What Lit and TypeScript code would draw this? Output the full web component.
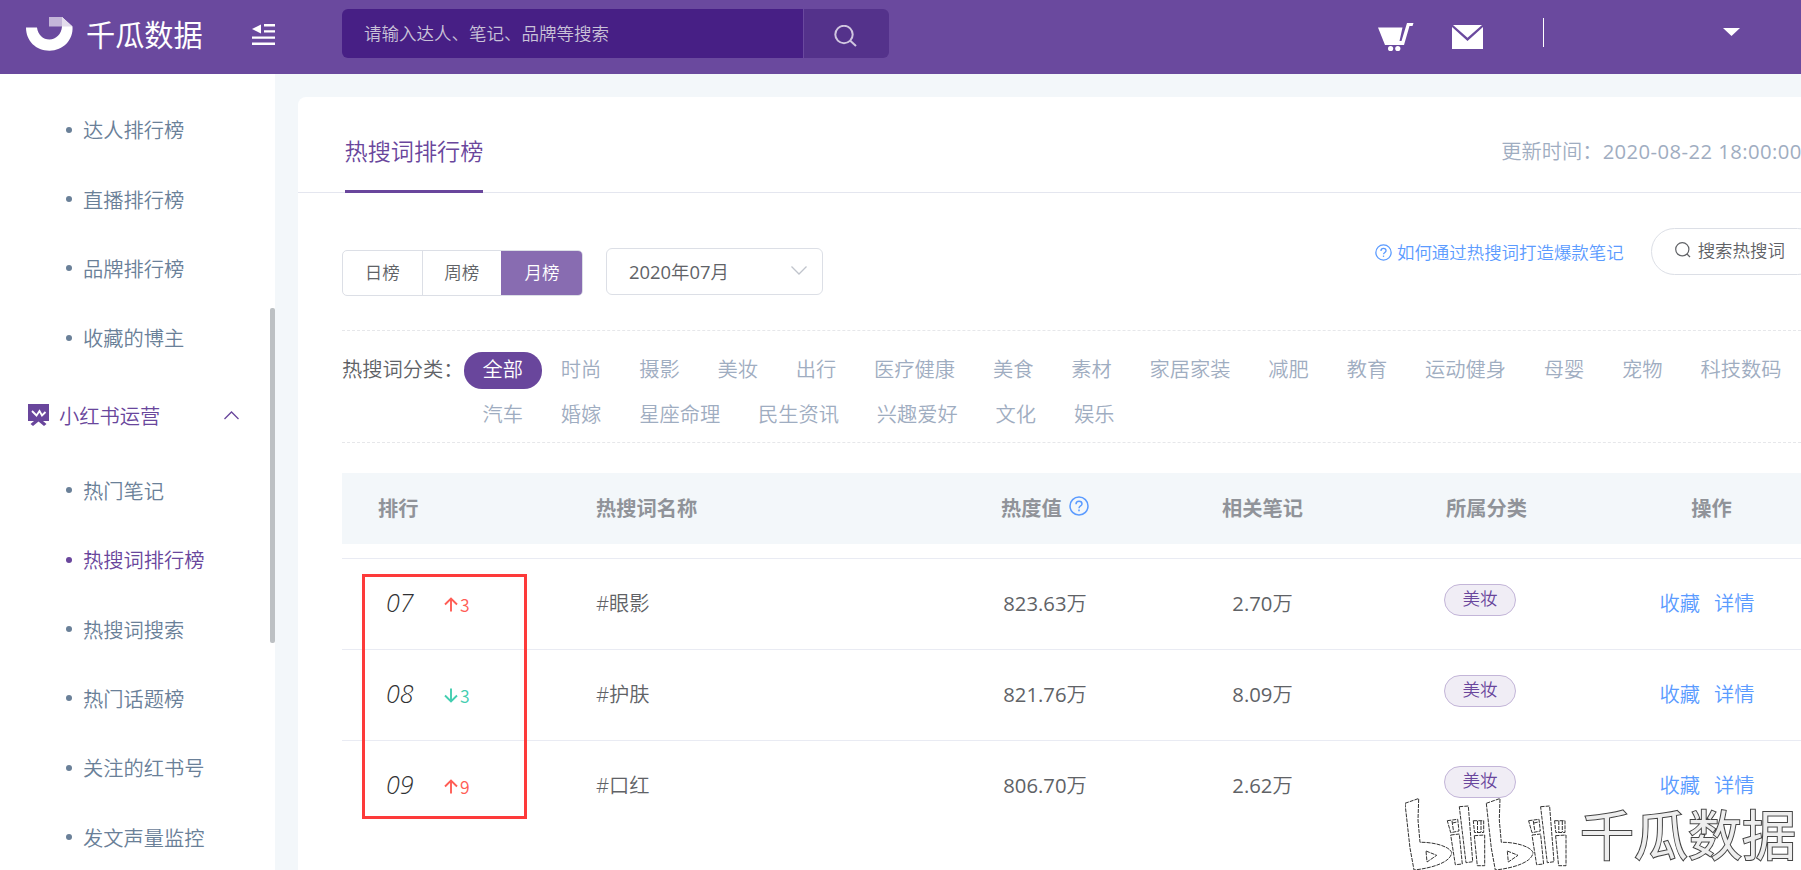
import { LitElement, html, css, svg } from "lit";
import { customElement } from "lit/decorators.js";
import { classMap } from "lit/directives/class-map.js";

interface Row {
  rank: string;
  up: boolean;
  delta: number;
  name: string;
  heat: string;
  notes: string;
}

const TOP_MENU = ["达人排行榜", "直播排行榜", "品牌排行榜", "收藏的博主"];
const SUB_MENU = ["热门笔记", "热搜词排行榜", "热搜词搜索", "热门话题榜", "关注的红书号", "发文声量监控"];
const CATEGORIES = [
  "全部", "时尚", "摄影", "美妆", "出行", "医疗健康", "美食", "素材", "家居家装", "减肥", "教育",
  "运动健身", "母婴", "宠物", "科技数码", "汽车", "婚嫁", "星座命理", "民生资讯", "兴趣爱好", "文化", "娱乐",
];
const ROWS: Row[] = [
  { rank: "07", up: true, delta: 3, name: "#眼影", heat: "823.63", notes: "2.70" },
  { rank: "08", up: false, delta: 3, name: "#护肤", heat: "821.76", notes: "8.09" },
  { rank: "09", up: true, delta: 9, name: "#口红", heat: "806.70", notes: "2.62" },
];

const help = (size: number) => html`<svg width=${size} height=${size} viewBox="0 0 20 20" fill="none" stroke="currentColor" stroke-width="1.5">
  <circle cx="10" cy="10" r="9"></circle>
  <path d="M7 8.2C7 6.2 8.3 5.2 10 5.2S13 6.300 13 7.900C13 9.900 10 10 10 12.200"></path>
  <path d="M10 13.600V15.200"></path>
</svg>`;

// One half of the watermark mark: a tall slanted stem with a bowl, then narrow bars.
const markHalf = svg`
  <path d="M0 5.300L13.700 .5L13 22L15 44.300C28 44 44 48 46.700 54.500C46 64 28 70 9 72L5 50Z"></path>
  <path d="M21 53L31.700 57.300L22 64Z"></path>
  <path d="M42.300 22.700L52.700 21.300L54 33L45.700 34.700ZM47 23L48.500 33M47.500 25L52 24"></path>
  <path d="M45.700 37L54.300 36L57.300 66L50.300 66.700Z"></path>
  <path d="M54.300 8.700L63.300 8L67.700 63.700L61 64.700Z"></path>
  <path d="M68.300 22.700H78.700V34.500H69.500ZM72.500 23V34M76 23V34M69.300 37.700L79.700 37V67.700H72.300Z"></path>`;

@customElement("app-root")
export class AppRoot extends LitElement {
  static styles = css`
    :host {
      display: block;
      height: 870px;
      overflow: hidden;
      position: relative;
      background: #f3f7fa;
      font-family: "Open Sans", "Noto Sans CJK SC", sans-serif;
      font-size: 20.25px;
      font-weight: 350;
      color: #606266;
      white-space: nowrap;
    }
    * { box-sizing: border-box; }
    svg { display: block; flex: none; }
    b { font-weight: 400; }
    .header {
      height: 74px;
      display: flex;
      align-items: flex-start;
      background: #6a499e;
      color: #fff;
    }
    .logo { margin: 17px 0 0 26px; }
    .brand { margin-left: 12px; width: 118px; height: 60px; line-height: 60px; font-size: 29.200px; font-weight: 400; margin-top: 5px; }
    .fold { margin: 24px 0 0 48px; }
    .search { margin: 9px 0 0 66px; display: flex; gap: 1px; height: 49px; border-radius: 6px; overflow: hidden; }
    .field { width: 461px; padding-left: 22px; background: #471f85; color: #c9c2d8; font-size: 17.5px; line-height: 48px; }
    .go { width: 85px; background: #54328b; padding: 16px 0 0 30px; }
    .cart { margin: 23px 0 0 489px; }
    .mail { margin: 25px 0 0 38px; }
    .bar { width: 1px; height: 29px; margin: 18px 0 0 60px; background: #fff; }
    .caret { margin: 28px 0 0 179px; }
    .body { display: flex; height: 796px; }
    .side { width: 275px; flex: none; background: #fff; display: flex; padding-top: 21px; color: #6a8098; }
    .menu { width: 270px; }
    .item { height: 69.4px; display: flex; align-items: center; padding-left: 66px; }
    .item::before { content: ""; width: 6px; height: 6px; border-radius: 3px; background: currentColor; margin-right: 11px; }
    .on { color: #69469c; }
    .group { height: 83px; display: flex; align-items: center; padding: 2px 31px 0 28px; color: #69469c; }
    .group span { flex: 1; margin-left: 10px; }
    .thumb { width: 5px; height: 335px; margin-top: 213px; border-radius: 2px; background: #bcc0c3; }
    .card { flex: none; width: 1560px; margin: 23px 0 0 23px; background: #fff; border-radius: 8px 0 0 0; }
    .tabs { height: 96px; border-bottom: 1px solid #e4e6ef; display: flex; padding-left: 46.500px; }
    .tab { height: 96px; line-height: 108px; font-size: 23.150px; color: #69469c; border-bottom: 3px solid #69469c; }
    .time { margin-left: 1018px; line-height: 109px; color: #9fadc1; }
    .date { letter-spacing: 0.420px; font-weight: 400; }
    .content { width: 1484px; margin-left: 44px; }
    .filters { height: 137px; display: flex; align-items: flex-start; padding-top: 35px; }
    .seg { display: flex; height: 46px; margin-top: 22px; border: 1px solid #dcdfe6; border-radius: 5px; overflow: hidden; font-size: 17.5px; line-height: 43px; }
    .seg div { width: 79.5px; text-align: center; border-right: 1px solid #dcdfe6; }
    .seg .act { width: 82px; margin: -1px -1px; line-height: 45px; background: #886cb1; color: #fff; border: 0; }
    .select { width: 217px; height: 47px; margin: 20px 0 0 23px; border: 1px solid #dcdfe6; border-radius: 6px; display: flex; align-items: center; justify-content: space-between; padding: 0 15px 2px 22px; font-size: 18.400px; }
    .link { color: #5b9bff; }
    .how { margin: 12px 0 0 552px; height: 24px; line-height: 24px; display: flex; align-items: center; font-size: 17.450px; gap: 5px; }
    .find { margin-left: 27px; width: 170px; height: 47px; border: 1px solid #dcdfe6; border-radius: 24px; display: flex; align-items: center; padding: 0 0 4px 23px; gap: 7px; font-size: 17.450px; }
    .cats { height: 113px; border: dashed #e6e7ea; border-width: 1px 0; display: flex; padding-top: 21px; line-height: 35px; }
    .label { width: 122px; }
    .tags { width: 1350px; display: flex; flex-wrap: wrap; align-content: flex-start; row-gap: 8px; color: #9fadc1; }
    .tags div { height: 37px; padding: 0 19.300px 0 18.500px; border-radius: 18px; }
    .tags .act { background: #69469c; color: #fff; }
    .grid { display: grid; grid-template-columns: 254px 340px 218px 217px 231px 219px; align-items: center; justify-items: center; }
    .head { margin-top: 30px; height: 71px; padding-bottom: 2px; background: #f3f7fa; color: #909399; font-weight: 700; }
    .rows { margin-top: 14px; position: relative; }
    .row { height: 91px; padding-bottom: 4px; border-top: 1px solid #e9ebf3; }
    .left { justify-self: start; }
    .rank { justify-self: start; margin-left: 44px; display: flex; align-items: center; height: 44px; }
    .rank i { width: 58px; font-size: 25px; color: #303133; font-weight: 350; }
    .up, .down { display: flex; align-items: center; font-size: 17.5px; gap: 2px; margin-top: 4px; font-family: "Noto Sans CJK SC", sans-serif; }
    .up { color: #ff5d55; }
    .down { color: #43ceb0; }
    .heat { display: flex; align-items: center; gap: 7px; }
    .heat .link { margin-bottom: 4px; }
    .chip { width: 72px; height: 32px; line-height: 27px; margin: 0 13px 4px 0; text-align: center; font-size: 17.5px; color: #69469c; background: #f0edf5; border: 1px solid #c3b5d8; border-radius: 16px; }
    .ops { display: flex; gap: 14px; margin-right: 9px; }
    .frame { position: absolute; left: 20px; top: 16px; width: 165px; height: 245px; border: 3px solid #fd3a3a; }
    .mark { position: absolute; left: 1405px; top: 798px; display: flex; }
    .mark span { font-size: 54px; line-height: 70px; margin-left: 13px; font-weight: 400; color: #eee; -webkit-text-stroke: 2px #444; paint-order: stroke fill; font-family: "Noto Sans CJK SC", sans-serif; }
  `;

  private header() {
    return html`<div class="header">
      <svg class="logo" width="48" height="34" viewBox="0 0 48 34">
        <path d="M0 10.500H11C12 18 17 22.500 23.500 22.500S35.500 17 36 9.500V0L46.500 9.500C47.500 23 37 33.700 23.500 33.700S0 24 0 10.500Z" fill="#fff"></path>
        <path d="M23 0H36V9.500H23Z" fill="#c4b6d9"></path><path d="M36 0L46.500 9.500H36Z" fill="#e3dcec"></path>
      </svg>
      <div class="brand">千瓜数据</div>
      <svg class="fold" width="24" height="22" viewBox="0 0 24 22" fill="#fff">
        <path d="M0 5L9 .5V9.500ZM12 0H23V2.500H12ZM12 6.200H23V8.500H12ZM0 12.500H23V14.700H0ZM0 18.600H23V21H0Z"></path>
      </svg>
      <div class="search">
        <div class="field">请输入达人、笔记、品牌等搜索</div>
        <div class="go"><svg width="23" height="22" viewBox="0 0 23 22" fill="none" stroke="#d0c6df" stroke-width="2">
          <circle cx="10" cy="9.500" r="8.700"></circle><path d="M16 15.500L22 21"></path></svg></div>
      </div>
      <svg class="cart" width="36" height="29" viewBox="0 0 36 29" fill="#fff">
        <path d="M0 4.500H24.500L21.500 18H23.500L29 0H35.500L34.500 3H31.500L26 22H7Z"></path>
        <circle cx="12.600" cy="25.500" r="2.600"></circle><circle cx="19.800" cy="25.500" r="2.600"></circle>
      </svg>
      <svg class="mail" width="31" height="24" viewBox="0 0 31 24" fill="#fff">
        <path d="M1 0H30L15.500 12.800ZM0 2L15.500 16L31 2V24H0Z"></path>
      </svg>
      <div class="bar"></div>
      <svg class="caret" width="17" height="8" viewBox="0 0 17 8"><path d="M0 0H17L8.500 8Z" fill="#fff"></path></svg>
    </div>`;
  }

  private side() {
    return html`<div class="side">
      <div class="menu">
        ${TOP_MENU.map((t) => html`<div class="item">${t}</div>`)}
        <div class="group">
          <svg width="21" height="22" viewBox="0 0 21 22"><path d="M0 0H21V17H15L18.500 20L16 22L10.500 17.500L5 22L2.500 20L6 17H0Z" fill="#69469c"></path>
            <path d="M4 7L8.500 11.500L11.500 7L14 11.500L17.500 8" fill="none" stroke="#fff" stroke-width="1.800"></path></svg>
          <span>小红书运营</span>
          <svg width="15" height="9" viewBox="0 0 15 9" fill="none" stroke="#69469c" stroke-width="1.300"><path d="M.5 8L7.500 1L14.500 8"></path></svg>
        </div>
        ${SUB_MENU.map((t, i) => html`<div class=${classMap({ item: true, on: i === 1 })}>${t}</div>`)}
      </div>
      <div class="thumb"></div>
    </div>`;
  }

  private row(r: Row) {
    return html`<div class="grid row">
      <div class="rank"><i>${r.rank}</i>
        <div class=${r.up ? "up" : "down"}>
          <svg width="14" height="15" viewBox="0 0 14 15" fill="none" stroke="currentColor" stroke-width="1.900">
            <path d=${r.up ? "M7 14.500V1.500M1 7.500L7 1.500L13 7.500" : "M7 .5V13.500M1 7.500L7 13.500L13 7.500"}></path></svg>
          <span>${r.delta}</span>
        </div>
      </div>
      <div class="left">${r.name}</div>
      <div><b>${r.heat}</b>万</div>
      <div><b>${r.notes}</b>万</div>
      <div class="chip">美妆</div>
      <div class="ops link"><span>收藏</span><span>详情</span></div>
    </div>`;
  }

  render() {
    return html`${this.header()}
      <div class="body">
        ${this.side()}
        <div class="card">
          <div class="tabs">
            <div class="tab">热搜词排行榜</div>
            <div class="time">更新时间：<span class="date">2020-08-22 18:00:00</span></div>
          </div>
          <div class="content">
            <div class="filters">
              <div class="seg"><div>日榜</div><div>周榜</div><div class="act">月榜</div></div>
              <div class="select"><span><b>2020</b>年<b>07</b>月</span>
                <svg width="16" height="9" viewBox="0 0 16 9" fill="none" stroke="#c0c4cc" stroke-width="1.300"><path d="M.5 .5L8 8L15.500 .5"></path></svg>
              </div>
              <div class="how link">${help(17)}<span>如何通过热搜词打造爆款笔记</span></div>
              <div class="find">
                <svg width="16" height="16" viewBox="0 0 16 16" fill="none" stroke="#606266" stroke-width="1.200"><circle cx="7.300" cy="7.300" r="6.600"></circle><path d="M12 12L15 15"></path></svg>
                <span>搜索热搜词</span>
              </div>
            </div>
            <div class="cats">
              <div class="label">热搜词分类：</div>
              <div class="tags">${CATEGORIES.map((c, i) => html`<div class=${classMap({ act: i === 0 })}>${c}</div>`)}</div>
            </div>
            <div class="grid head">
              <div class="left" style="margin-left:36px">排行</div>
              <div class="left">热搜词名称</div>
              <div class="heat">热度值<span class="link">${help(20)}</span></div>
              <div>相关笔记</div><div>所属分类</div><div>操作</div>
            </div>
            <div class="rows">${ROWS.map((r) => this.row(r))}<div class="frame"></div></div>
          </div>
        </div>
      </div>
      <div class="mark">
        <svg width="162" height="72" viewBox="0 0 162 72" fill="#fff" stroke="#333" stroke-width="1" stroke-dasharray="4 1">
          <g>${markHalf}</g><g transform="translate(81.300 0)">${markHalf}</g>
        </svg>
        <span>千瓜数据</span>
      </div>`;
  }
}
